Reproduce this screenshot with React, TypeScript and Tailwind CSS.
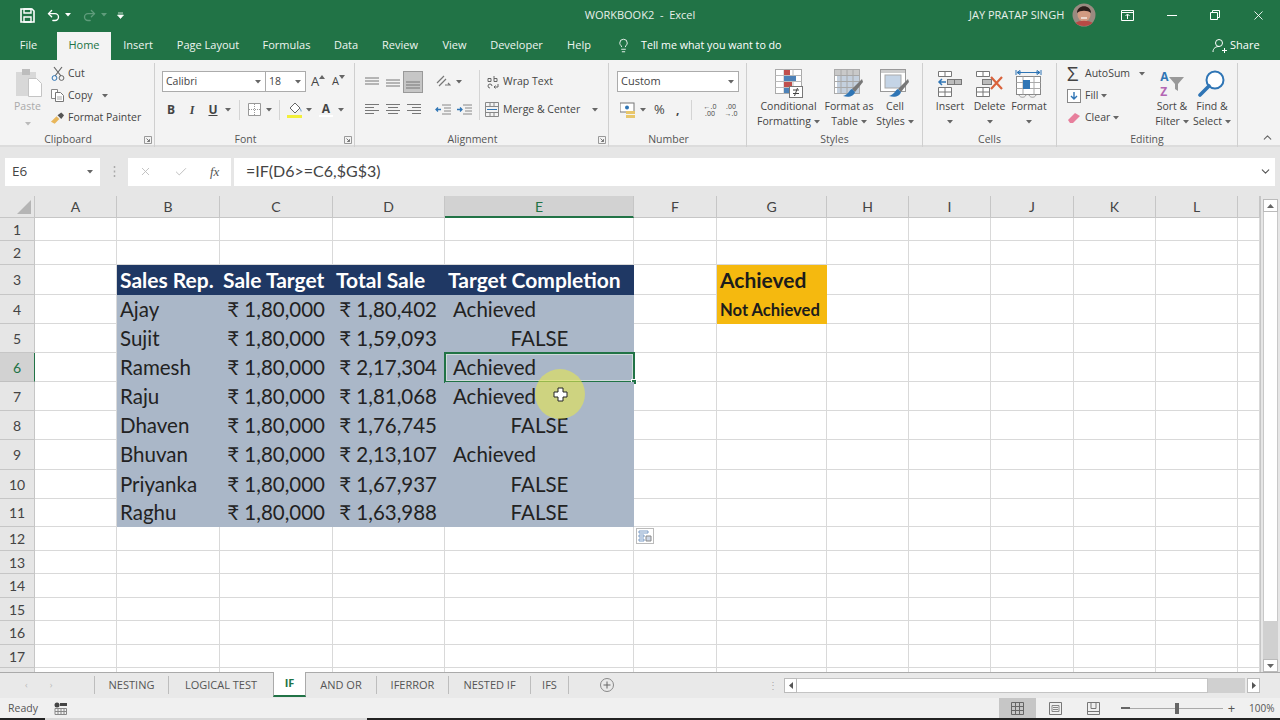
import React from "react";
import { ChevronDown, Lightbulb, Undo2, Redo2, X, Check } from "lucide-react";

const Caret = ({ className = "" }: { className?: string }) => (
  <svg width="6" height="4" viewBox="0 0 6 4" className={"shrink-0 " + className}><path d="M0 0h6L3 3.5z" fill="#666" /></svg>
);

const Lines = ({ rows }: { rows: [number, number][] }) => (
  <svg width="16" height="14" viewBox="0 0 16 14">
    {rows.map(([x, w], i) => <rect key={i} x={x} y={1 + i * 3} width={w} height="1" fill="#777" />)}
  </svg>
);

const Launcher = () => (
  <svg width="8" height="8" viewBox="0 0 8 8" className="shrink-0"><path d="M.5.5h7v7h-7z" fill="none" stroke="#999" /><path d="M2.5 2.5l3 3M5.5 3.2v2.3H3.2" fill="none" stroke="#777" /></svg>
);

const Group = ({ w, label, launcher, children }: { w: string; label: string; launcher?: boolean; children: React.ReactNode }) => (
  <div className={"flex flex-col shrink-0 h-[84px] mt-[3px] border-r border-[#cfcfcf] " + w}>
    <div className="flex-1 flex min-h-0">{children}</div>
    <div className="h-[16px] flex items-center pt-[1px]">
      <span className={"flex-1 text-center text-[10.5px] text-[#555] " + (launcher ? "pr-[18px]" : "")}>{label}</span>
      {launcher && <span className="absolute ml-[-11px]"><Launcher /></span>}
    </div>
  </div>
);

const BigBtn = ({ w, icon, l1, l2, caret }: { w: string; icon: React.ReactNode; l1: string; l2?: string; caret?: boolean }) => (
  <div className={"flex flex-col items-center shrink-0 " + w}>
    <div className="h-[31px] mt-[5px] flex items-center justify-center">{icon}</div>
    <div className="h-[15px] leading-[15px] text-[10.5px] text-[#444] whitespace-nowrap">{l1}</div>
    <div className="h-[15px] leading-[15px] text-[10.5px] text-[#444] whitespace-nowrap flex items-center gap-[3px]">
      {l2}{caret && <Caret />}
    </div>
  </div>
);

const CondIcon = () => (
  <svg width="28" height="30" viewBox="0 0 28 30">
    <rect x=".5" y=".5" width="26" height="24" fill="#fff" stroke="#aaa" />
    <path d="M9 .5v24M18 .5v24M.5 6.5h26M.5 12.5h26M.5 18.5h26" stroke="#bbb" />
    <rect x="9" y="1" width="6" height="5" fill="#c0504d" />
    <rect x="9" y="7" width="12" height="5" fill="#4d82b8" />
    <rect x="9" y="13" width="8" height="5" fill="#c0504d" />
    <rect x="9" y="19" width="5" height="5" fill="#4d82b8" />
    <rect x="14.5" y="17.5" width="13" height="11" fill="#fff" stroke="#777" />
    <path d="M18 21h6M18 24.5h6M19.5 27l3-8" stroke="#444" />
  </svg>
);
const TableIcon = () => (
  <svg width="30" height="30" viewBox="0 0 30 30">
    <rect x=".5" y=".5" width="25" height="24" fill="#fff" stroke="#aaa" />
    <rect x="1" y="1" width="24" height="5" fill="#c9c9c9" />
    <rect x="3" y="7" width="22" height="17" fill="#c4d0de" />
    <path d="M7 .5v24M13 .5v24M19 .5v24M.5 6.5h25M.5 12.5h25M.5 18.5h25" stroke="#a8a8a8" />
    <path d="M28 10L18 20l3 3L29 13z" fill="#777" /><path d="M18 20c-3 1-3 5-9 7 6 2 11 0 12-4z" fill="#2f75b5" />
  </svg>
);
const StylesIcon = () => (
  <svg width="30" height="30" viewBox="0 0 30 30">
    <rect x=".5" y=".5" width="25" height="22" fill="#fff" stroke="#999" />
    <rect x="1" y="1" width="24" height="3" fill="#ccc" />
    <rect x="5" y="6" width="16" height="13" fill="#c4d4e6" stroke="#aaa" />
    <path d="M28 10L18 20l3 3L29 13z" fill="#777" /><path d="M18 20c-3 1-3 5-9 7 6 2 11 0 12-4z" fill="#2f75b5" />
  </svg>
);
const InsertIcon = () => (
  <svg width="26" height="28" viewBox="0 0 26 28">
    <path d="M1.5 1.5h13v5h-13zM8 1.5v5M1.5 17.5h13v9h-13zM8 17.5v9M1.5 22h13" fill="#fff" stroke="#777" />
    <rect x="10.5" y="9.5" width="14" height="5" fill="#bbb" stroke="#777" /><path d="M17.5 9.5v5" stroke="#777" />
    <path d="M9 12H2m3-3l-3 3 3 3" fill="none" stroke="#2f75b5" strokeWidth="1.5" />
  </svg>
);
const DeleteIcon = () => (
  <svg width="30" height="28" viewBox="0 0 30 28">
    <path d="M1.5 1.5h13v5h-13zM8 1.5v5M1.5 17.5h13v9h-13zM8 17.5v9M1.5 22h13" fill="#fff" stroke="#777" />
    <rect x="7.5" y="9.5" width="9" height="5" fill="#bbb" stroke="#777" />
    <path d="M16 7l11 12M27 7L16 19" stroke="#d9623b" strokeWidth="2.2" />
  </svg>
);
const FormatIcon = () => (
  <svg width="28" height="30" viewBox="0 0 28 30">
    <path d="M1 1v5M26 1v5M2 3.5h23M2 3.5l3-2v4zM25 3.5l-3-2v4z" fill="none" stroke="#2f75b5" />
    <rect x="1.5" y="7.5" width="24" height="18" fill="#fff" stroke="#888" />
    <path d="M8 7.5v18M19 7.5v18M1.5 13.5h24M1.5 19.5h24" stroke="#aaa" />
    <rect x="8" y="11" width="7" height="9" fill="#2f75b5" />
    <path d="M4 26c1 3 6 3 7 0M14 26c1 3 6 3 7 0" fill="none" stroke="#999" />
  </svg>
);
const SortIcon = () => (
  <div className="flex items-center">
    <div className="flex flex-col text-[12px] leading-[15px] font-bold">
      <span className="text-[#2f75b5]">A</span>
      <span className="text-[#b366b3]">Z</span>
    </div>
    <svg width="15" height="16" viewBox="0 0 15 16"><path d="M0 1h15L9 8v7l-3-2V8z" fill="#999" /></svg>
  </div>
);
const FindIcon = () => (
  <svg width="28" height="30" viewBox="0 0 28 30">
    <circle cx="17" cy="11" r="8.5" fill="#fff" stroke="#2f75b5" strokeWidth="2" />
    <path d="M11 17L2 26" stroke="#2f75b5" strokeWidth="3.6" strokeLinecap="round" />
  </svg>
);

const PasteIcon = () => (
  <svg width="28" height="30" viewBox="0 0 28 30">
    <rect x="1" y="4" width="20" height="24" fill="#d8d8d8" />
    <rect x="7" y="1" width="8" height="6" fill="#bdbdbd" />
    <path d="M13.5 10.5h8l5 5v13h-13z" fill="#fff" stroke="#c4c4c4" />
  </svg>
);

const CutIcon = () => (
  <svg width="14" height="15" viewBox="0 0 14 15"><path d="M3 1l7 9M11 1L4 10" stroke="#666" strokeWidth="1.2" /><circle cx="3.5" cy="12" r="2.4" fill="none" stroke="#2f75b5" /><circle cx="10.5" cy="12" r="2.4" fill="none" stroke="#666" /></svg>
);
const CopyIcon = () => (
  <svg width="15" height="15" viewBox="0 0 15 15"><path d="M1.5 1.5h6v9h-6z" fill="#fff" stroke="#888" /><path d="M5.5 4.5h5l3 3v6h-8z" fill="#fff" stroke="#777" /><path d="M7 9h5M7 11h5" stroke="#aaa" /></svg>
);
const PainterIcon = () => (
  <svg width="16" height="14" viewBox="0 0 16 14"><path d="M1 11l6-6 3 3-5 5z" fill="#e8b65a" /><path d="M8 4l4-3 3 3-3 4z" fill="#555" /></svg>
);

const CellBase = "border-r border-b border-[#d9d9d9]";
const colHeads = ["A", "B", "C", "D", "E", "F", "G", "H", "I", "J", "K", "L", ""];

const data: [string, string, string, string][] = [
  ["Ajay", "₹ 1,80,000", "₹ 1,80,402", "Achieved"],
  ["Sujit", "₹ 1,80,000", "₹ 1,59,093", "FALSE"],
  ["Ramesh", "₹ 1,80,000", "₹ 2,17,304", "Achieved"],
  ["Raju", "₹ 1,80,000", "₹ 1,81,068", "Achieved"],
  ["Dhaven", "₹ 1,80,000", "₹ 1,76,745", "FALSE"],
  ["Bhuvan", "₹ 1,80,000", "₹ 2,13,107", "Achieved"],
  ["Priyanka", "₹ 1,80,000", "₹ 1,67,937", "FALSE"],
  ["Raghu", "₹ 1,80,000", "₹ 1,63,988", "FALSE"],
];

const RowHead = ({ n, active }: { n: number | string; active?: boolean }) => (
  <div className={"flex items-center justify-center text-[14px] border-b border-r " + (active ? "bg-[#d2d2d2] text-[#217346] border-r-[#217346] border-b-[#c0c0c0]" : "bg-[#e6e6e6] text-[#444] border-[#c6c6c6]")}>{n}</div>
);

const Blank = ({ count }: { count: number }) => (
  <>{Array.from({ length: count }).map((_, i) => <div key={i} className={CellBase} />)}</>
);

const headCell = "bg-[#1f3864] text-white font-bold text-[21px] flex items-center whitespace-nowrap";
const bodyCell = "bg-[#aab7c8] text-[#222] text-[20.5px] flex items-center pb-[1px] whitespace-nowrap";

const Sheet = () => {
  const rows: React.ReactNode[] = [];
  rows.push(
    <div key="corner" className="bg-[#e6e6e6] border-r border-b border-[#c6c6c6] flex items-end justify-end p-[3px]">
      <svg width="14" height="14" viewBox="0 0 14 14"><path d="M14 0v14H0z" fill="#b5b5b5" /></svg>
    </div>
  );
  colHeads.forEach((c, i) =>
    rows.push(
      <div key={"h" + i} className={"flex items-center justify-center text-[14px] border-r " + (c === "E" ? "bg-[#d2d2d2] text-[#217346] border-b-2 border-b-[#217346] border-r-[#c6c6c6]" : "bg-[#e6e6e6] text-[#444] border-b border-[#c6c6c6]")}>{c}</div>
    )
  );
  [1, 2].forEach((n) => {
    rows.push(<RowHead key={"r" + n} n={n} />);
    rows.push(<React.Fragment key={"b" + n}><Blank count={13} /></React.Fragment>);
  });
  rows.push(<RowHead key="r3" n={3} />);
  rows.push(<div key="3a" className={CellBase} />);
  rows.push(<div key="3b" className={headCell + " pl-[3px]"}>Sales Rep.</div>);
  rows.push(<div key="3c" className={headCell + " pl-[3px]"}>Sale Target</div>);
  rows.push(<div key="3d" className={headCell + " pl-[3px]"}>Total Sale</div>);
  rows.push(<div key="3e" className={headCell + " pl-[3px]"}>Target Completion</div>);
  rows.push(<div key="3f" className={CellBase} />);
  rows.push(<div key="3g" className="bg-[#f5b90f] text-[#1c1c1c] font-bold text-[21px] flex items-center pl-[3px]">Achieved</div>);
  rows.push(<React.Fragment key="3r"><Blank count={6} /></React.Fragment>);
  data.forEach((d, i) => {
    const n = i + 4;
    rows.push(<RowHead key={"r" + n} n={n} active={n === 6} />);
    rows.push(<div key={n + "a"} className={CellBase} />);
    rows.push(<div key={n + "b"} className={bodyCell + " pl-[3px]"}>{d[0]}</div>);
    rows.push(<div key={n + "c"} className={bodyCell + " justify-end pr-[8px]"}>{d[1]}</div>);
    rows.push(<div key={n + "d"} className={bodyCell + " justify-end pr-[8px]"}>{d[2]}</div>);
    rows.push(
      <div key={n + "e"} className={"relative " + bodyCell + " " + (d[3] === "FALSE" ? "justify-center" : "pl-[8px]") + (n === 6 ? " z-10" : "") + (n === 7 ? " z-20" : "")}>
        {d[3]}
        {n === 6 && (
          <div className="absolute inset-[-1px] border-2 border-[#217346] pointer-events-none">
            <div className="absolute inset-0 border border-[#dfe8e2]/70" />
            <div className="absolute right-[-4px] bottom-[-4px] w-[6px] h-[6px] bg-[#217346] border border-white" />
          </div>
        )}
        {n === 7 && (
          <div className="absolute left-[90px] top-[-13px] w-[50px] h-[50px] rounded-full bg-[#e6e650]/60 flex items-center justify-center">
            <svg width="15" height="15" viewBox="0 0 15 15"><path d="M5 1h5v4h4v5h-4v4H5v-4H1V5h4z" fill="#fff" stroke="#222" /></svg>
          </div>
        )}
      </div>
    );
    rows.push(
      <div key={n + "f"} className={CellBase + " relative"}>
        {n === 11 && (
          <div className="absolute left-[2px] top-[29px] w-[18px] h-[16px] border border-[#bbb] bg-white flex items-center justify-center z-10">
            <svg width="14" height="12" viewBox="0 0 14 12"><path d="M1 1h9v2H1zM1 5h5v2H1zM1 9h5v2H1z" fill="none" stroke="#7a9cc6" /><path d="M8 6h5v5H8z" fill="#cfd8e6" stroke="#888" /></svg>
          </div>
        )}
      </div>
    );
    if (n === 4) rows.push(<div key="4g" className="bg-[#f5b90f] text-[#1c1c1c] font-bold text-[16.6px] flex items-center pl-[3px] pt-[1px] whitespace-nowrap">Not Achieved</div>);
    else rows.push(<div key={n + "g"} className={CellBase} />);
    rows.push(<React.Fragment key={n + "r"}><Blank count={6} /></React.Fragment>);
  });
  [12, 13, 14, 15, 16, 17].forEach((n) => {
    rows.push(<RowHead key={"r" + n} n={n} />);
    rows.push(<React.Fragment key={"b" + n}><Blank count={13} /></React.Fragment>);
  });
  rows.push(<div key="r18" className="bg-[#e6e6e6] border-r border-[#c6c6c6]" />);
  rows.push(<React.Fragment key="b18">{Array.from({ length: 13 }).map((_, i) => <div key={i} className="border-r border-[#d9d9d9]" />)}</React.Fragment>);

  return (
    <div className="grid grid-cols-[35px_82px_103px_113px_112px_189px_83px_110px_82px_82px_83px_82px_82px_22px] grid-rows-[22px_23px_24px_30px_29px_29px_29px_29px_29px_30px_29px_28px_24px_23px_24px_23px_24px_23px_4px] font-['Lato',sans-serif] bg-white w-[1260px] overflow-hidden">
      {rows}
    </div>
  );
};

const Sep = ({ h = "h-[20px]", mx = "mx-[5px]" }: { h?: string; mx?: string }) => <div className={"w-px bg-[#d4d4d4] shrink-0 " + h + " " + mx} />;

const tabs: [string, string][] = [
  ["File", "w-[57px]"],
  ["Home", "w-[54px]"],
  ["Insert", "w-[54px]"],
  ["Page Layout", "w-[86px]"],
  ["Formulas", "w-[71px]"],
  ["Data", "w-[48px]"],
  ["Review", "w-[60px]"],
  ["View", "w-[49px]"],
  ["Developer", "w-[75px]"],
  ["Help", "w-[50px]"],
];

const sheets: [string, string][] = [
  ["NESTING", "w-[73px]"],
  ["LOGICAL TEST", "w-[104px]"],
  ["IF", "w-[33px]"],
  ["AND OR", "w-[70px]"],
  ["IFERROR", "w-[71px]"],
  ["NESTED IF", "w-[81px]"],
  ["IFS", "w-[37px]"],
];

export default function App() {
  return (
    <div className="w-[1280px] h-[720px] overflow-hidden bg-[#e6e6e6] flex flex-col font-['Open_Sans','Noto_Sans',sans-serif]">
      {/* title bar */}
      <div className="h-[30px] bg-[#217346] flex items-center text-white shrink-0">
        <div className="w-[500px] flex items-center pl-[20px]">
          <svg width="15" height="15" viewBox="0 0 15 15"><path d="M1 1h11l2 2v11H1z" fill="none" stroke="#fff" strokeWidth="1.6" /><path d="M4 1h7v4H4zM4 9h7v5H4z" fill="none" stroke="#fff" strokeWidth="1.4" /></svg>
          <Undo2 size={15} strokeWidth={2.2} className="ml-[11px]" />
          <svg width="6" height="4" viewBox="0 0 6 4" className="ml-[4px]"><path d="M0 0h6L3 3.5z" fill="#fff" /></svg>
          <Redo2 size={15} strokeWidth={2.2} className="ml-[11px] text-[#5f9c7b]" />
          <svg width="6" height="4" viewBox="0 0 6 4" className="ml-[4px]"><path d="M0 0h6L3 3.5z" fill="#5f9c7b" /></svg>
          <svg width="7" height="7" viewBox="0 0 7 7" className="ml-[10px]"><path d="M1 1h5M0.5 3h6L3.5 6.5z" fill="#fff" stroke="#fff" strokeWidth=".7" /></svg>
        </div>
        <div className="w-[280px] text-center text-[11px] text-[#e8f0ea] whitespace-nowrap">WORKBOOK2&nbsp; -&nbsp; Excel</div>
        <div className="w-[189px]" />
        <div className="text-[11px] text-[#e8f0ea] whitespace-nowrap w-[103px]">JAY PRATAP SINGH</div>
        <svg width="24" height="24" viewBox="0 0 24 24" className="shrink-0">
          <circle cx="12" cy="12" r="11.5" fill="#9a8a80" />
          <circle cx="12" cy="12" r="6.5" fill="#d29b82" />
          <path d="M5 10c0-9 14-9 14 0-3-3-11-3-14 0z" fill="#2c1d1a" />
          <path d="M9 15h6" stroke="#fff" strokeWidth="1.2" />
          <path d="M3.5 20c3-3 14-3 17 0-4 4-13 4-17 0z" fill="#b84a45" />
        </svg>
        <svg width="13" height="11" viewBox="0 0 13 11" className="ml-[25px] shrink-0"><path d="M.5.5h12v10H.5zM.5 2.5h12" fill="none" stroke="#fff" /><path d="M6.5 9V4.5M4.5 6l2-2 2 2" fill="none" stroke="#fff" /></svg>
        <div className="w-[10px] h-px bg-white ml-[33px] shrink-0" />
        <svg width="10" height="10" viewBox="0 0 10 10" className="ml-[33px] shrink-0"><path d="M2.5 2.5V.5h7v7h-2M.5 2.5h7v7h-7z" fill="none" stroke="#fff" /></svg>
        <X size={15} strokeWidth={1.4} className="ml-[31px] shrink-0" />
      </div>
      {/* tab bar */}
      <div className="h-[30px] bg-[#217346] flex items-end shrink-0 text-white text-[11px]">
        {tabs.map(([t, w]) => (
          <div key={t} className={"h-[28px] flex items-center justify-center pb-[2px] whitespace-nowrap shrink-0 " + w + (t === "Home" ? " bg-[#f3f3f3] text-[#217346]" : " text-[#eef5f0]")}>{t}</div>
        ))}
        <div className="h-[28px] flex items-center pb-[2px] pl-[12px] w-[608px] shrink-0 whitespace-nowrap">
          <Lightbulb size={15} strokeWidth={1.4} />
          <span className="ml-[10px] text-[10.7px]">Tell me what you want to do</span>
        </div>
        <div className="h-[28px] flex items-center pb-[2px] whitespace-nowrap gap-[3px] shrink-0">
          <svg width="15" height="15" viewBox="0 0 15 15"><circle cx="7" cy="5" r="3.5" fill="none" stroke="#fff" /><path d="M1 14c0-4 3-5.5 6-5.5M10 12.5h5M12.5 10v5" fill="none" stroke="#fff" /></svg>
          <span>Share</span>
        </div>
      </div>
      {/* ribbon */}
      <div className="h-[87px] bg-[#f3f3f3] border-b-2 border-[#dcdcdc] flex shrink-0 text-[#444] text-[10.5px]">
        <Group w="w-[155px]" label="Clipboard" launcher>
          <div className="w-[50px] pl-[15px] shrink-0 flex flex-col items-start">
            <div className="mt-[5px]"><PasteIcon /></div>
            <div className="mt-[1px] text-[#aaa] -ml-px">Paste</div>
            <Caret className="ml-[10px] mt-[7px] opacity-40" />
          </div>
          <div className="flex flex-col">
            <div className="h-[21px] flex items-center gap-[3px]"><span className="w-[15px] flex justify-center"><CutIcon /></span>Cut</div>
            <div className="h-[23px] flex items-center gap-[3px]"><span className="w-[15px] flex justify-center"><CopyIcon /></span>Copy<Caret className="ml-[6px]" /></div>
            <div className="h-[21px] flex items-center gap-[3px] whitespace-nowrap"><span className="w-[15px] flex justify-center"><PainterIcon /></span>Format Painter</div>
          </div>
        </Group>
        <Group w="w-[200px]" label="Font" launcher>
          <div className="flex flex-col pl-[7px]">
            <div className="flex items-center mt-[8px] h-[21px]">
              <div className="w-[104px] h-[21px] bg-white border border-[#ababab] flex items-center justify-between pl-[3px] pr-[4px]">Calibri<Caret /></div>
              <div className="w-[40px] h-[21px] bg-white border border-[#ababab] border-l-0 flex items-center justify-between pl-[3px] pr-[4px]">18<Caret /></div>
              <span className="ml-[5px] flex items-start w-[19px] text-[13px]">A<svg width="6" height="4" viewBox="0 0 6 4" className="mt-[3px]"><path d="M0 4h6L3 0z" fill="#666" /></svg></span>
              <span className="ml-[2px] flex items-start w-[17px] text-[11px]">A<svg width="6" height="4" viewBox="0 0 6 4" className="mt-[2px]"><path d="M0 0h6L3 4z" fill="#666" /></svg></span>
            </div>
            <div className="flex items-center mt-[7px] h-[21px]">
              <span className="w-[18px] text-center font-bold text-[12px]">B</span>
              <span className="w-[24px] text-center italic font-bold text-[12px] font-['Liberation_Serif',serif]">I</span>
              <span className="w-[18px] text-center underline font-bold text-[12px]">U</span>
              <Caret className="ml-[3px]" />
              <Sep mx="mx-[8px]" />
              <svg width="13" height="13" viewBox="0 0 13 13"><path d="M.5.5h12v12H.5z" fill="#fff" stroke="#999" /><path d="M6.5 1v11M1 6.5h11" stroke="#999" strokeDasharray="1 1" /></svg>
              <Caret className="ml-[5px]" />
              <Sep mx="mx-[7px]" />
              <svg width="16" height="18" viewBox="0 0 16 18"><path d="M3 7l5-5 5 5-5 5z" fill="#fff" stroke="#666" /><path d="M13 7c1 1 2 3 1 4z" fill="#2f75b5" /><rect x="0" y="14" width="15" height="3" fill="#f2ef3a" /></svg>
              <Caret className="ml-[3px]" />
              <span className="ml-[6px] w-[16px] flex flex-col items-center leading-[13px] font-bold text-[12px]">A<span className="block w-[14px] h-[2px] bg-white" /></span>
              <Caret className="ml-[4px]" />
            </div>
          </div>
        </Group>
        <Group w="w-[254px]" label="Alignment" launcher>
          <div className="flex pl-[6px]">
            <div className="flex flex-col w-[118px] shrink-0">
              <div className="flex items-center mt-[7px] h-[23px]">
                <span className="w-[21px] flex justify-center"><svg width="14" height="10" viewBox="0 0 14 10"><path d="M0 1h14M0 4h14M0 7h14" stroke="#777" /></svg></span>
                <span className="w-[21px] flex justify-center"><svg width="14" height="10" viewBox="0 0 14 10"><path d="M0 3h14M0 6h14M0 9h14" stroke="#777" /></svg></span>
                <span className="w-[20px] h-[22px] bg-[#c6c6c6] border border-[#999] flex items-end justify-center pb-[3px]"><svg width="14" height="9" viewBox="0 0 14 9"><path d="M0 2h14M0 5h14M0 8h14" stroke="#777" /></svg></span>
                <span className="ml-[13px] flex items-center gap-[5px]"><svg width="15" height="13" viewBox="0 0 15 13"><path d="M1 8L8 1M3 11l7-7M9 10h5l-2-2" fill="none" stroke="#777" strokeWidth="1.2" /></svg><Caret /></span>
              </div>
              <div className="flex items-center mt-[5px] h-[23px]">
                <span className="w-[21px] flex justify-center"><Lines rows={[[1, 14], [1, 9], [1, 14], [1, 9]]} /></span>
                <span className="w-[21px] flex justify-center"><Lines rows={[[1, 14], [3, 10], [1, 14], [3, 10]]} /></span>
                <span className="w-[21px] flex justify-center"><Lines rows={[[1, 14], [6, 9], [1, 14], [6, 9]]} /></span>
                <span className="ml-[11px] flex gap-[5px]">
                  <svg width="16" height="12" viewBox="0 0 16 12"><path d="M7 1h9M9 4h7M9 7h7M7 10h9" stroke="#888" /><path d="M6 5.5H1m2-2l-2 2 2 2" fill="none" stroke="#2f75b5" strokeWidth="1.3" /></svg>
                  <svg width="16" height="12" viewBox="0 0 16 12"><path d="M7 1h9M9 4h7M9 7h7M7 10h9" stroke="#888" /><path d="M1 5.5h5m-2-2l2 2-2 2" fill="none" stroke="#2f75b5" strokeWidth="1.3" /></svg>
                </span>
              </div>
            </div>
            <div className="w-px h-[50px] bg-[#d4d4d4] mt-[7px] shrink-0" />
            <div className="flex flex-col pl-[7px]">
              <div className="flex items-center mt-[7px] h-[23px] gap-[4px] whitespace-nowrap">
                <svg width="12" height="14" viewBox="0 0 12 14"><path d="M1 3.5h3v3H1zM7 1v5.5h3v-3H7M5 11a2 2 0 1 0-2 2M7 12h4V9M7 12l1.5-1.5M7 12l1.5 1.5" fill="none" stroke="#666" /></svg>
                Wrap Text
              </div>
              <div className="flex items-center mt-[5px] -ml-[2px] h-[23px] gap-[4px] whitespace-nowrap"><svg width="14" height="15" viewBox="0 0 14 15"><path d="M.5.5h13v14H.5zM.5 4.5h13M.5 10.5h13M5 .5v4M9 .5v4M5 10.5v4M9 10.5v4" fill="none" stroke="#888" /><path d="M2 7.5h10" stroke="#2f75b5" /></svg>Merge &amp; Center<Caret className="ml-[8px]" /></div>
            </div>
          </div>
        </Group>
        <Group w="w-[138px]" label="Number" launcher>
          <div className="flex flex-col pl-[8px]">
            <div className="mt-[8px] w-[122px] h-[21px] bg-white border border-[#ababab] flex items-center justify-between pl-[3px] pr-[4px] text-[11px]">Custom<Caret /></div>
            <div className="flex items-center mt-[7px] h-[21px] pl-[3px]">
              <svg width="16" height="16" viewBox="0 0 16 16"><rect x="0" y="1" width="14" height="9" fill="#fff" stroke="#777" /><circle cx="7" cy="5.5" r="2" fill="#2f75b5" /><rect x="6" y="9" width="9" height="3" fill="#e8c66a" /><rect x="6" y="13" width="9" height="3" fill="#e8c66a" /></svg>
              <Caret className="ml-[4px]" />
              <span className="ml-[8px] text-[13px] w-[15px]">%</span>
              <span className="ml-[7px] font-bold text-[12px] w-[5px]">,</span>
              <Sep mx="mx-[10px]" />
              <span className="w-[16px] text-[7px] leading-[7px] text-center">←.0<br />.00</span>
              <span className="ml-[5px] w-[16px] text-[7px] leading-[7px] text-center">.00<br />→.0</span>
            </div>
          </div>
        </Group>
        <Group w="w-[176px]" label="Styles">
          <div className="flex pl-[3px]">
            <BigBtn w="w-[77px]" icon={<CondIcon />} l1="Conditional" l2="Formatting" caret />
            <BigBtn w="w-[44px]" icon={<TableIcon />} l1="Format as" l2="Table" caret />
            <BigBtn w="w-[48px]" icon={<StylesIcon />} l1="Cell" l2="Styles" caret />
          </div>
        </Group>
        <Group w="w-[134px]" label="Cells">
          <div className="flex pl-[7px]">
            <BigBtn w="w-[40px]" icon={<InsertIcon />} l1="Insert" caret />
            <BigBtn w="w-[39px]" icon={<DeleteIcon />} l1="Delete" caret />
            <BigBtn w="w-[40px]" icon={<FormatIcon />} l1="Format" caret />
          </div>
        </Group>
        <Group w="w-[181px]" label="Editing">
          <div className="flex pl-[10px]">
            <div className="flex flex-col w-[86px] shrink-0">
              <div className="h-[21px] flex items-center"><span className="text-[20px] leading-none w-[18px] text-[#444]">Σ</span>AutoSum<Caret className="ml-[9px]" /></div>
              <div className="h-[23px] flex items-center"><span className="w-[18px]"><svg width="14" height="14" viewBox="0 0 14 14"><rect x=".5" y=".5" width="13" height="13" fill="#fff" stroke="#888" /><path d="M7 3v7M4 7l3 3 3-3" fill="none" stroke="#2f75b5" strokeWidth="1.4" /></svg></span>Fill<Caret className="ml-[3px]" /></div>
              <div className="h-[21px] flex items-center"><span className="w-[18px]"><svg width="14" height="12" viewBox="0 0 14 12"><path d="M1 8l7-7 5 3-7 7H3z" fill="#e77f9c" /></svg></span>Clear<Caret className="ml-[3px]" /></div>
            </div>
            <BigBtn w="w-[38px]" icon={<SortIcon />} l1="Sort &" l2="Filter" caret />
            <BigBtn w="w-[42px]" icon={<FindIcon />} l1="Find &" l2="Select" caret />
          </div>
        </Group>
        <div className="flex-1 flex flex-col items-end pr-[6px] overflow-hidden">
          <div className="flex-1" />
          <ChevronDown size={13} className="rotate-180 mb-[1px] text-[#666]" />
        </div>
      </div>
      {/* formula bar */}
      <div className="h-[49px] bg-[#e6e6e6] flex items-center shrink-0 pl-[5px]">
        <div className="w-[95px] h-[28px] bg-white flex items-center justify-between pl-[7px] pr-[7px] text-[13.5px] text-[#444]">E6<Caret /></div>
        <div className="w-[28px] flex justify-center">
          <svg width="3" height="11" viewBox="0 0 3 11"><path d="M1.5 0v2M1.5 4.5v2M1.5 9v2" stroke="#aaa" strokeWidth="1.5" /></svg>
        </div>
        <div className="w-[103px] h-[28px] bg-white flex items-center pl-[11px] text-[#bbb]">
          <X size={13} strokeWidth={1.6} />
          <Check size={14} strokeWidth={1.6} className="ml-[22px]" />
          <span className="ml-[22px] font-['Liberation_Serif',serif] italic text-[13px] text-[#555]">fx</span>
        </div>
        <div className="ml-[3px] w-[1041px] h-[28px] bg-white flex items-center justify-between pl-[12px] pr-[3px] pb-[1px] text-[16px] text-[#444] font-['Lato',sans-serif]">
          =IF(D6&gt;=C6,$G$3)
          <ChevronDown size={13} strokeWidth={2} className="text-[#555]" />
        </div>
      </div>
      {/* sheet */}
      <div className="flex shrink-0 h-[476px] overflow-hidden">
        <Sheet />
        <div className="w-[20px] bg-[#e6e6e6] flex flex-col items-center pt-[3px] border-l border-[#c6c6c6]">
          <div className="w-[15px] h-[13px] bg-white border border-[#bbb] flex items-center justify-center"><svg width="7" height="4" viewBox="0 0 7 4"><path d="M0 4h7L3.5 0z" fill="#666" /></svg></div>
          <div className="w-[15px] h-[409px] bg-white border-x border-[#c8c8c8]" />
          <div className="w-[15px] flex-1 bg-[#d0d0d0]" />
          <div className="w-[15px] h-[13px] bg-white border border-[#bbb] flex items-center justify-center"><svg width="7" height="4" viewBox="0 0 7 4"><path d="M0 0h7L3.5 4z" fill="#666" /></svg></div>
        </div>
      </div>
      {/* sheet tabs */}
      <div className="h-[26px] bg-[#e9e9e9] border-t border-[#aaa] flex items-stretch shrink-0 text-[11px] text-[#555] pb-[1px]">
        <div className="w-[94px] flex items-center text-[#bbb] text-[9px] shrink-0 pl-[25px] gap-[22px]"><span>‹</span><span>›</span></div>
        <div className="w-px bg-[#bdbdbd] my-[3px]" />
        {sheets.map(([s, w]) => (
          <React.Fragment key={s}>
            {s === "IF"
              ? <div className={"flex items-center justify-center bg-white text-[#217346] font-bold border-b-2 border-[#217346] border-x border-x-[#aaa] -mt-px shrink-0 " + w}>{s}</div>
              : <div className={"flex items-center justify-center whitespace-nowrap shrink-0 " + w}>{s}</div>}
            {s !== "LOGICAL TEST" && s !== "IF" && <div className="w-px bg-[#bdbdbd] my-[3px] shrink-0" />}
          </React.Fragment>
        ))}
        <div className="w-[28px] shrink-0" />
        <div className="flex items-center w-[20px] justify-center shrink-0"><svg width="14" height="14" viewBox="0 0 14 14"><circle cx="7" cy="7" r="6.5" fill="none" stroke="#888" /><path d="M7 3.5v7M3.5 7h7" stroke="#666" /></svg></div>
        <div className="w-[151px] shrink-0" />
        <div className="flex items-center w-[14px] text-[#aaa] text-[10px] shrink-0">⋮</div>
        <div className="flex items-center ml-[2px] shrink-0">
          <div className="w-[13px] h-[15px] bg-white border border-[#bbb] flex items-center justify-center"><svg width="4" height="7" viewBox="0 0 4 7"><path d="M4 0v7L0 3.5z" fill="#555" /></svg></div>
          <div className="w-[411px] h-[15px] bg-white border-y border-r border-[#c4c4c4]" />
          <div className="w-[37px] h-[15px] bg-[#d0d0d0]" />
          <div className="ml-[2px] w-[13px] h-[15px] bg-white border border-[#bbb] flex items-center justify-center"><svg width="4" height="7" viewBox="0 0 4 7"><path d="M0 0v7L4 3.5z" fill="#555" /></svg></div>
        </div>
      </div>
      {/* status bar */}
      <div className="h-[20px] bg-[#f0f0f0] flex items-center shrink-0 text-[10.5px] text-[#555]">
        <span className="pl-[8px] pt-[1px] w-[54px] shrink-0">Ready</span>
        <svg width="13" height="13" viewBox="0 0 13 13" className="shrink-0"><circle cx="3" cy="3" r="2.5" fill="#444" /><rect x="6" y="1" width="7" height="3" fill="#444" /><path d="M1 6.5h11.5v6H1zM4 6.5v6M7 6.5v6M10 6.5v6M1 9.5h11.5" fill="none" stroke="#888" /></svg>
        <div className="w-[932px] shrink-0" />
        <div className="w-[37px] h-[20px] bg-[#c6c6c6] flex items-center justify-center shrink-0"><svg width="13" height="13" viewBox="0 0 13 13"><path d="M.5.5h12v12H.5zM4.5.5v12M8.5.5v12M.5 4.5h12M.5 8.5h12" fill="none" stroke="#666" /></svg></div>
        <div className="w-[38px] flex justify-center shrink-0"><svg width="13" height="13" viewBox="0 0 13 13"><path d="M.5.5h12v12H.5z" fill="none" stroke="#777" /><path d="M3 3.5h7v6H3zM4 5.5h5M4 7.5h5" fill="none" stroke="#888" /></svg></div>
        <div className="w-[38px] flex justify-center shrink-0"><svg width="13" height="13" viewBox="0 0 13 13"><path d="M.5.5h12v12H.5zM.5 9.5h12M4 .5v6h5v-6" fill="none" stroke="#777" /></svg></div>
        <div className="w-[9px] h-[1.5px] bg-[#666] ml-[9px] shrink-0" />
        <div className="w-[93px] h-px bg-[#aaa] shrink-0 flex justify-center items-center">
          <div className="w-[4px] h-[11px] bg-[#666]" />
        </div>
        <div className="ml-[3px] text-[13px] w-[11px] leading-none text-center shrink-0">+</div>
        <div className="ml-[12px] text-[10px] whitespace-nowrap shrink-0">100%</div>
      </div>
      <div className="h-[2px] bg-[#222] shrink-0 flex">
        <div className="ml-[45px] w-[322px] bg-[#d8d8d8]" />
      </div>
    </div>
  );
}
